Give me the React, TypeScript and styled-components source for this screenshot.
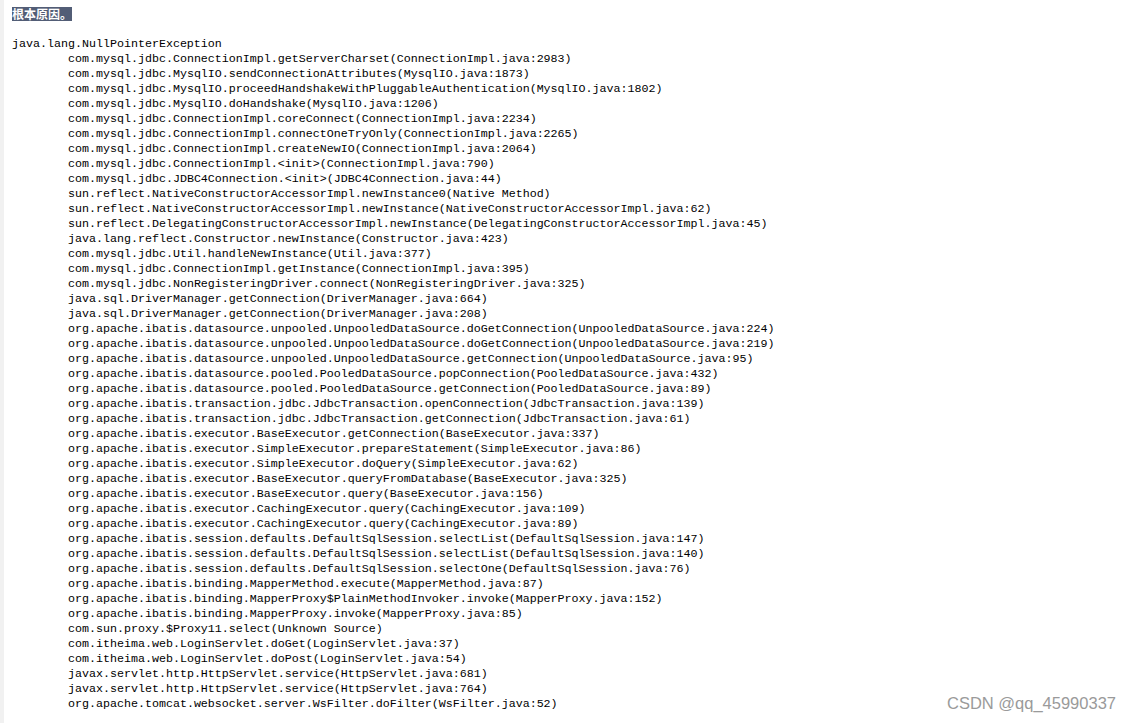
import React from "react";
import styled, { createGlobalStyle } from "styled-components";

const GlobalStyle = createGlobalStyle`
  html, body {
    margin: 0;
    padding: 0;
    background: #ffffff;
  }
  body {
    min-height: 723px;
    overflow: hidden;
  }
`;

const Page = styled.div`
  position: relative;
  min-height: 723px;
  box-sizing: border-box;
  border-left: 4px solid #f1f1f1;
  padding: 7px 0 0 8px;
`;

const Heading = styled.b`
  display: inline-block;
  height: 14px;
  line-height: 14px;
  background: #525d76;
  color: #ffffff;
  font-family: "Noto Sans CJK SC", "Noto Sans", sans-serif;
  font-size: 12px;
  font-weight: 700;
  vertical-align: top;
`;

const Trace = styled.pre`
  margin: 12px 0 0 0;
  font-family: "Liberation Mono", "DejaVu Sans Mono", monospace;
  font-size: 11.667px;
  line-height: 15px;
  color: #000000;
  tab-size: 8;
  -moz-tab-size: 8;
  white-space: pre;
`;

const Watermark = styled.div`
  position: absolute;
  right: 15px;
  bottom: 10px;
  font-family: "Liberation Sans", Arial, sans-serif;
  font-size: 16.5px;
  line-height: 20px;
  color: #9a9a9a;
  text-shadow: 0 0 2px #ffffff;
`;

const frames: string[] = [
  "com.mysql.jdbc.ConnectionImpl.getServerCharset(ConnectionImpl.java:2983)",
  "com.mysql.jdbc.MysqlIO.sendConnectionAttributes(MysqlIO.java:1873)",
  "com.mysql.jdbc.MysqlIO.proceedHandshakeWithPluggableAuthentication(MysqlIO.java:1802)",
  "com.mysql.jdbc.MysqlIO.doHandshake(MysqlIO.java:1206)",
  "com.mysql.jdbc.ConnectionImpl.coreConnect(ConnectionImpl.java:2234)",
  "com.mysql.jdbc.ConnectionImpl.connectOneTryOnly(ConnectionImpl.java:2265)",
  "com.mysql.jdbc.ConnectionImpl.createNewIO(ConnectionImpl.java:2064)",
  "com.mysql.jdbc.ConnectionImpl.<init>(ConnectionImpl.java:790)",
  "com.mysql.jdbc.JDBC4Connection.<init>(JDBC4Connection.java:44)",
  "sun.reflect.NativeConstructorAccessorImpl.newInstance0(Native Method)",
  "sun.reflect.NativeConstructorAccessorImpl.newInstance(NativeConstructorAccessorImpl.java:62)",
  "sun.reflect.DelegatingConstructorAccessorImpl.newInstance(DelegatingConstructorAccessorImpl.java:45)",
  "java.lang.reflect.Constructor.newInstance(Constructor.java:423)",
  "com.mysql.jdbc.Util.handleNewInstance(Util.java:377)",
  "com.mysql.jdbc.ConnectionImpl.getInstance(ConnectionImpl.java:395)",
  "com.mysql.jdbc.NonRegisteringDriver.connect(NonRegisteringDriver.java:325)",
  "java.sql.DriverManager.getConnection(DriverManager.java:664)",
  "java.sql.DriverManager.getConnection(DriverManager.java:208)",
  "org.apache.ibatis.datasource.unpooled.UnpooledDataSource.doGetConnection(UnpooledDataSource.java:224)",
  "org.apache.ibatis.datasource.unpooled.UnpooledDataSource.doGetConnection(UnpooledDataSource.java:219)",
  "org.apache.ibatis.datasource.unpooled.UnpooledDataSource.getConnection(UnpooledDataSource.java:95)",
  "org.apache.ibatis.datasource.pooled.PooledDataSource.popConnection(PooledDataSource.java:432)",
  "org.apache.ibatis.datasource.pooled.PooledDataSource.getConnection(PooledDataSource.java:89)",
  "org.apache.ibatis.transaction.jdbc.JdbcTransaction.openConnection(JdbcTransaction.java:139)",
  "org.apache.ibatis.transaction.jdbc.JdbcTransaction.getConnection(JdbcTransaction.java:61)",
  "org.apache.ibatis.executor.BaseExecutor.getConnection(BaseExecutor.java:337)",
  "org.apache.ibatis.executor.SimpleExecutor.prepareStatement(SimpleExecutor.java:86)",
  "org.apache.ibatis.executor.SimpleExecutor.doQuery(SimpleExecutor.java:62)",
  "org.apache.ibatis.executor.BaseExecutor.queryFromDatabase(BaseExecutor.java:325)",
  "org.apache.ibatis.executor.BaseExecutor.query(BaseExecutor.java:156)",
  "org.apache.ibatis.executor.CachingExecutor.query(CachingExecutor.java:109)",
  "org.apache.ibatis.executor.CachingExecutor.query(CachingExecutor.java:89)",
  "org.apache.ibatis.session.defaults.DefaultSqlSession.selectList(DefaultSqlSession.java:147)",
  "org.apache.ibatis.session.defaults.DefaultSqlSession.selectList(DefaultSqlSession.java:140)",
  "org.apache.ibatis.session.defaults.DefaultSqlSession.selectOne(DefaultSqlSession.java:76)",
  "org.apache.ibatis.binding.MapperMethod.execute(MapperMethod.java:87)",
  "org.apache.ibatis.binding.MapperProxy$PlainMethodInvoker.invoke(MapperProxy.java:152)",
  "org.apache.ibatis.binding.MapperProxy.invoke(MapperProxy.java:85)",
  "com.sun.proxy.$Proxy11.select(Unknown Source)",
  "com.itheima.web.LoginServlet.doGet(LoginServlet.java:37)",
  "com.itheima.web.LoginServlet.doPost(LoginServlet.java:54)",
  "javax.servlet.http.HttpServlet.service(HttpServlet.java:681)",
  "javax.servlet.http.HttpServlet.service(HttpServlet.java:764)",
  "org.apache.tomcat.websocket.server.WsFilter.doFilter(WsFilter.java:52)",
];

const traceText =
  "java.lang.NullPointerException\n" + frames.map((f) => "\t" + f).join("\n");

export default function App() {
  return (
    <>
      <GlobalStyle />
      <Page>
        <Heading>根本原因。</Heading>
        <Trace>{traceText}</Trace>
        <Watermark>CSDN @qq_45990337</Watermark>
      </Page>
    </>
  );
}
